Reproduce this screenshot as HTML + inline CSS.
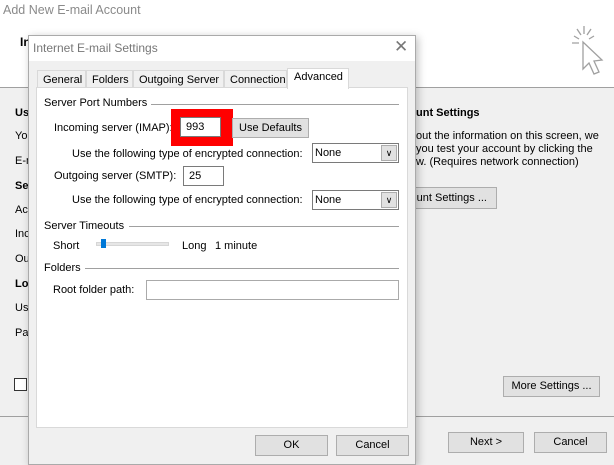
<!DOCTYPE html><html><head><style>
*{margin:0;padding:0;box-sizing:border-box}
body{width:614px;height:463px;overflow:hidden;background:#f0f0f0;font-family:"Liberation Sans",sans-serif;font-size:11px;color:#000;position:relative}
.a{position:absolute;white-space:nowrap}
.btn{position:absolute;background:#e1e1e1;border:1px solid #adadad;text-align:center;line-height:18px}
.inp{position:absolute;background:#fff;border:1px solid #7a7a7a}
.b{font-weight:bold}
.hl{position:absolute;height:1px;background:#a0a0a0}
</style></head><body>
<div class="a" style="left:0;top:0;width:614px;height:88px;background:#fff;border-bottom:1px solid #a0a0a0"></div>
<div class="a" style="left:3px;top:3px;font-size:12.5px;color:#8a8a8a">Add New E-mail Account</div>
<div class="a b" style="left:20px;top:35px;font-size:12px">In</div>
<svg class="a" style="left:568px;top:24px" width="40" height="56" viewBox="0 0 40 56" fill="none" stroke="#a0a0a0" stroke-width="1.3"><path d="M16 2v8M6 12l5 3M26 12l-5 3M4 19h7M9 5l4 6M23 5l-4 6"/><path d="M15 18l0 27l6-6l5 11l5-2l-5-11l8-1z"/></svg>
<div class="a b" style="left:15px;top:107px">Us</div>
<div class="a" style="left:15px;top:130px">You</div>
<div class="a" style="left:15px;top:155px">E-m</div>
<div class="a b" style="left:15px;top:180px">Se</div>
<div class="a" style="left:15px;top:204px">Acc</div>
<div class="a" style="left:15px;top:228px">Inc</div>
<div class="a" style="left:15px;top:253px">Ou</div>
<div class="a b" style="left:15px;top:278px">Lo</div>
<div class="a" style="left:15px;top:302px">Use</div>
<div class="a" style="left:15px;top:327px">Pas</div>
<div class="a" style="left:14px;top:378px;width:13px;height:13px;border:1px solid #333;background:#fff"></div>
<div class="a b" style="left:416px;top:107px">unt Settings</div>
<div class="a" style="left:416px;top:130px">out the information on this screen, we</div>
<div class="a" style="left:416px;top:143px">you test your account by clicking the</div>
<div class="a" style="left:416px;top:156px">w. (Requires network connection)</div>
<div class="btn" style="left:395px;top:187px;width:102px;height:22px;text-align:right;padding-right:9px;line-height:20px">unt Settings ...</div>
<div class="btn" style="left:503px;top:376px;width:97px;height:21px">More Settings ...</div>
<div class="a" style="left:0;top:416px;width:614px;height:1px;background:#a0a0a0"></div>
<div class="btn" style="left:340px;top:432px;width:39px;height:21px;text-align:right;padding-right:6px">ck</div>
<div class="btn" style="left:448px;top:432px;width:76px;height:21px">Next &gt;</div>
<div class="btn" style="left:534px;top:432px;width:73px;height:21px">Cancel</div>

<div class="a" style="left:28px;top:35px;width:388px;height:430px;background:#f0f0f0;border:1px solid #aaa;box-shadow:2px 2px 8px rgba(0,0,0,.25)">
 <div class="a" style="left:0;top:0;width:386px;height:25px;background:#fff"></div>
 <div class="a" style="left:4px;top:5px;font-size:12px;color:#777">Internet E-mail Settings</div>
 <div class="a" style="left:365px;top:1px;font-size:17px;color:#777;font-weight:300">✕</div>
 <div class="a" style="left:7px;top:51px;width:372px;height:341px;background:#fff;border:1px solid #d9d9d9"></div>
 <div class="a" style="left:8px;top:34px;width:49px;height:18px;border:1px solid #d9d9d9;background:#f0f0f0;padding:3px 0 0 5px">General</div>
 <div class="a" style="left:57px;top:34px;width:47px;height:18px;border:1px solid #d9d9d9;background:#f0f0f0;padding:3px 0 0 5px">Folders</div>
 <div class="a" style="left:104px;top:34px;width:91px;height:18px;border:1px solid #d9d9d9;background:#f0f0f0;padding:3px 0 0 5px">Outgoing Server</div>
 <div class="a" style="left:195px;top:34px;width:63px;height:18px;border:1px solid #d9d9d9;background:#f0f0f0;padding:3px 0 0 5px">Connection</div>
 <div class="a" style="left:258px;top:32px;width:62px;height:21px;border:1px solid #d9d9d9;border-bottom:none;background:#fff;padding:2px 0 0 6px">Advanced</div>
 <div class="a" style="left:15px;top:61px">Server Port Numbers</div><div class="hl" style="left:122px;top:68px;width:248px"></div>
 <div class="a" style="left:25px;top:86px">Incoming server (IMAP):</div>
 <div class="a" style="left:142px;top:73px;width:62px;height:37px;background:#f00"></div>
 <div class="inp" style="left:151px;top:81px;width:41px;height:20px;padding:3px 0 0 5px">993</div>
 <div class="btn" style="left:203px;top:82px;width:77px;height:20px">Use Defaults</div>
 <div class="a" style="left:43px;top:112px">Use the following type of encrypted connection:</div>
 <div class="inp" style="left:283px;top:107px;width:87px;height:20px;padding:3px 0 0 2px">None<div class="a" style="right:1px;top:1px;width:16px;height:16px;background:#e1e1e1;border:1px solid #adadad;font-size:9px;text-align:center;line-height:14px">∨</div></div>
 <div class="a" style="left:25px;top:134px">Outgoing server (SMTP):</div>
 <div class="inp" style="left:154px;top:130px;width:41px;height:20px;padding:3px 0 0 5px">25</div>
 <div class="a" style="left:43px;top:158px">Use the following type of encrypted connection:</div>
 <div class="inp" style="left:283px;top:154px;width:87px;height:20px;padding:3px 0 0 2px">None<div class="a" style="right:1px;top:1px;width:16px;height:16px;background:#e1e1e1;border:1px solid #adadad;font-size:9px;text-align:center;line-height:14px">∨</div></div>
 <div class="a" style="left:15px;top:184px">Server Timeouts</div><div class="hl" style="left:100px;top:190px;width:270px"></div>
 <div class="a" style="left:24px;top:204px">Short</div>
 <div class="a" style="left:67px;top:206px;width:73px;height:4px;background:#e6e6e6;border:1px solid #d6d6d6"></div>
 <div class="a" style="left:72px;top:203px;width:5px;height:9px;background:#0078d7"></div>
 <div class="a" style="left:153px;top:204px">Long</div>
 <div class="a" style="left:186px;top:204px">1 minute</div>
 <div class="a" style="left:15px;top:226px">Folders</div><div class="hl" style="left:56px;top:232px;width:314px"></div>
 <div class="a" style="left:24px;top:248px">Root folder path:</div>
 <div class="a" style="left:117px;top:244px;width:253px;height:20px;border:1px solid #aaa;background:#fff"></div>
 <div class="btn" style="left:226px;top:399px;width:73px;height:21px">OK</div>
 <div class="btn" style="left:307px;top:399px;width:73px;height:21px">Cancel</div>
</div>
</body></html>
